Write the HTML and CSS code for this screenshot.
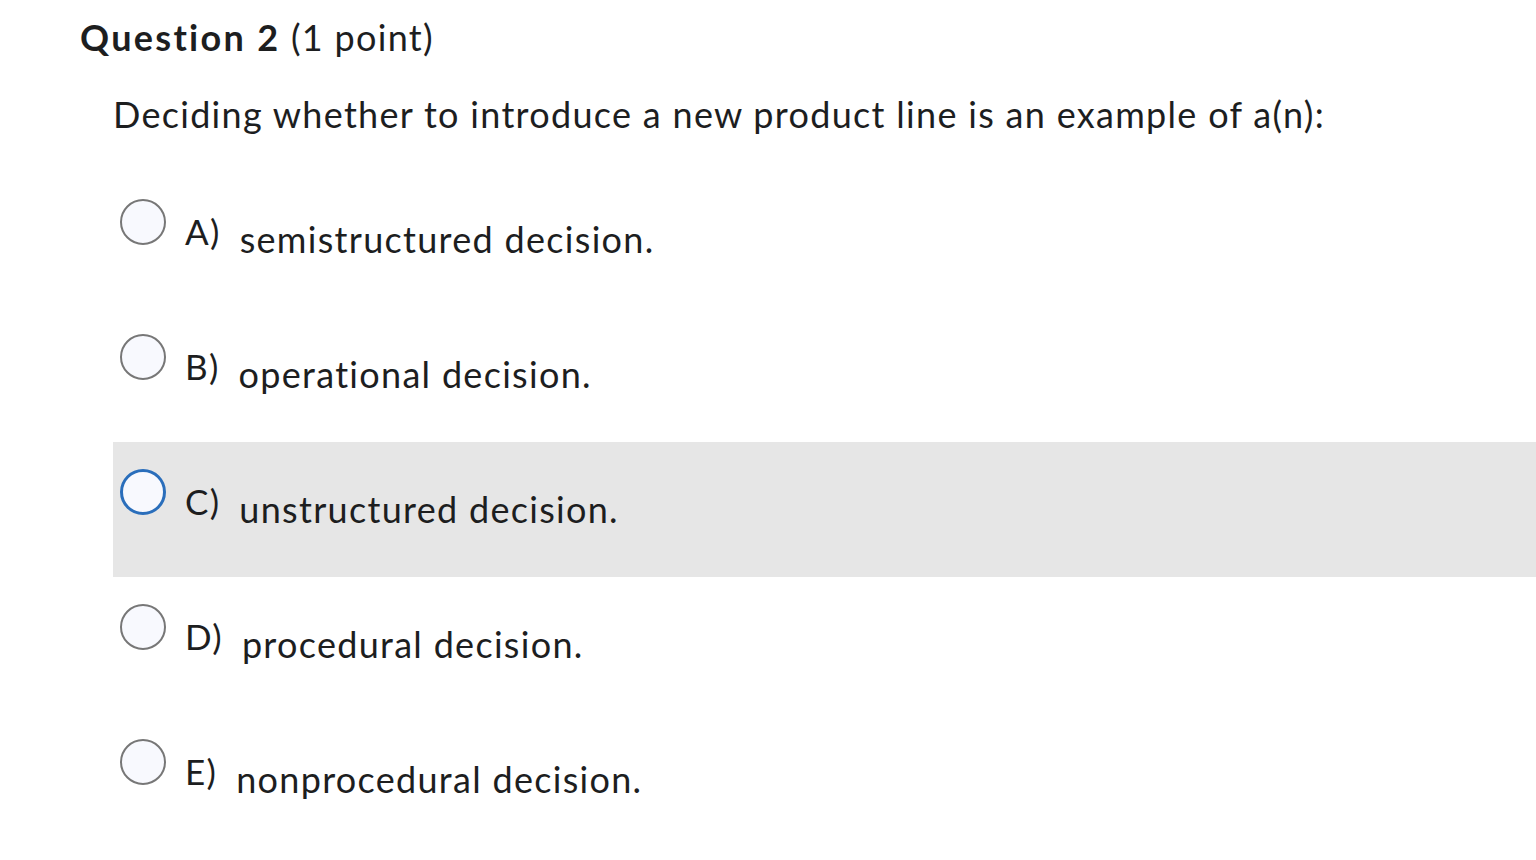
FILE: index.html
```html
<!DOCTYPE html>
<html lang="en">
<head>
<meta charset="utf-8">
<title>Question 2</title>
<link rel="stylesheet" href="styles.css">
</head>
<body>
<main class="quiz">
  <h2 class="q-title"><strong>Question 2</strong> <span class="q-points">(1 point)</span></h2>
  <p class="q-text">Deciding whether to introduce a new product line is an example of a(n):</p>
  <div class="options">
    <label class="option">
      <span class="radio"></span>
      <span class="opt-letter">A)</span>
      <span class="opt-text">semistructured decision.</span>
    </label>
    <label class="option">
      <span class="radio"></span>
      <span class="opt-letter">B)</span>
      <span class="opt-text">operational decision.</span>
    </label>
    <label class="option option-hover">
      <span class="radio radio-focus"></span>
      <span class="opt-letter">C)</span>
      <span class="opt-text">unstructured decision.</span>
    </label>
    <label class="option">
      <span class="radio"></span>
      <span class="opt-letter">D)</span>
      <span class="opt-text">procedural decision.</span>
    </label>
    <label class="option">
      <span class="radio"></span>
      <span class="opt-letter">E)</span>
      <span class="opt-text">nonprocedural decision.</span>
    </label>
  </div>
</main>
</body>
</html>
```

FILE: styles.css
```css
html, body {
  margin: 0;
  padding: 0;
  background: #ffffff;
}

body {
  font-family: Lato, "Open Sans", sans-serif;
  color: #1d1e1f;
  width: 1536px;
  height: 860px;
  overflow: hidden;
  letter-spacing: 1.3px;
  font-variant-ligatures: none;
}

.quiz {
  padding: 16px 0 0 80px;
}

.q-title {
  margin: 0;
  font-size: 36px;
  line-height: 43px;
  font-weight: 400;
  letter-spacing: 1.3px;
}

.q-title strong {
  font-weight: 700;
  letter-spacing: 2.3px;
}

.q-text {
  margin: 34px 0 0 33px;
  font-size: 36px;
  line-height: 43px;
}

.options {
  margin: 36px 0 0 33px;
  display: flex;
  flex-direction: column;
}

.option {
  display: flex;
  align-items: flex-start;
  height: 135px;
  padding-left: 7px;
  box-sizing: border-box;
}

.option-hover {
  background: #e6e6e6;
}

.radio {
  flex: none;
  width: 46px;
  height: 46px;
  margin-top: 27px;
  border-radius: 50%;
  border: 2px solid #777777;
  background: #f8f9fe;
  box-sizing: border-box;
}

.radio-focus {
  border: 3px solid #2a6ebb;
}

.opt-letter {
  margin: 38px 0 0 19px;
  font-size: 35px;
  line-height: 43px;
}

.opt-text {
  margin: 46px 0 0 19px;
  font-size: 36px;
  line-height: 43px;
}
```
